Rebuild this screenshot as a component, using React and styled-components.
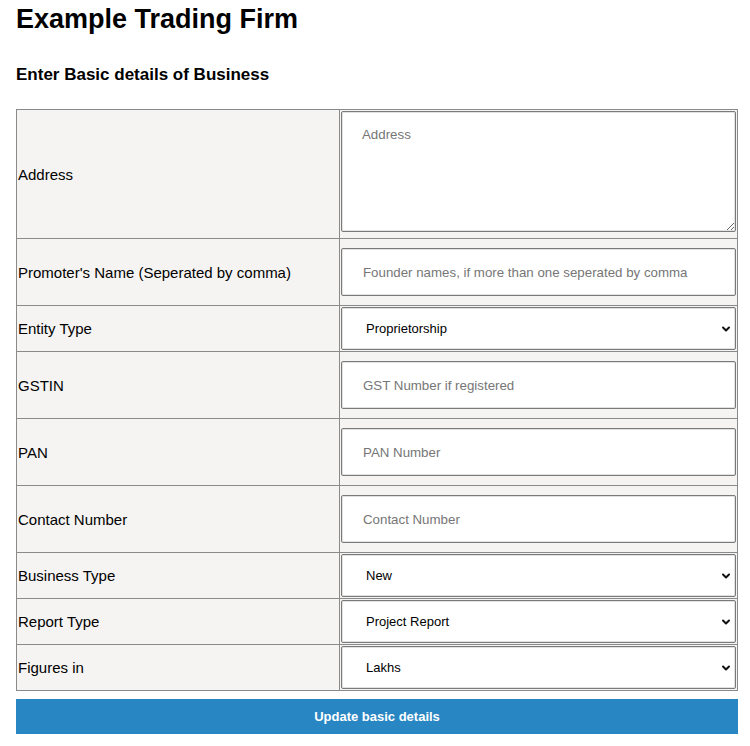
import styled, { createGlobalStyle } from "styled-components";
import { ChevronDown } from "lucide-react";

const GlobalStyle = createGlobalStyle`
  body {
    margin: 0;
    background: #fff;
    font-family: "Liberation Sans", Arial, sans-serif;
    color: #000;
  }
`;

const Page = styled.div`
  padding: 0 12px 0 16px;
  width: 722px;
`;

const Title = styled.h1`
  font-size: 27px;
  font-weight: 700;
  margin: 4px 0 0;
`;

const SubTitle = styled.h3`
  font-size: 17px;
  font-weight: 700;
  margin: 30px 0 24px;
`;

const Table = styled.table`
  width: 722px;
  border-collapse: collapse;
  table-layout: fixed;
`;

const Label = styled.td`
  width: 320px;
  border: 1px solid #8a8a8a;
  background: #f5f4f2;
  padding: 0 1px;
  font-size: 15px;
  vertical-align: middle;
`;

const Field = styled.td`
  border: 1px solid #8a8a8a;
  background: #f5f4f2;
  padding: 1px;
`;

const boxBorder = `
  border: 1px solid #7a7a7a;
  box-shadow: inset 0 0 0 1px #e2e2e2;
  border-radius: 2px;
`;

const TextArea = styled.textarea`
  display: block;
  box-sizing: border-box;
  width: 100%;
  height: 121px;
  margin: 0 0 5px;
  padding: 15px 20px;
  ${boxBorder}
  background: #fff;
  font: 13.3px "Liberation Sans", Arial, sans-serif;
  resize: vertical;
  &::placeholder { color: #767676; }
`;

const Input = styled.input`
  display: block;
  box-sizing: border-box;
  width: 100%;
  height: 48px;
  margin: 8px 0;
  padding: 0 21px;
  ${boxBorder}
  background: #fff;
  font: 13.3px "Liberation Sans", Arial, sans-serif;
  &::placeholder { color: #767676; }
`;

const SelectWrap = styled.div`
  position: relative;
`;

const Select = styled.select`
  display: block;
  box-sizing: border-box;
  width: 100%;
  height: 43px;
  padding: 0 24px;
  appearance: none;
  ${boxBorder}
  background: #fff;
  color: #000;
  font: 13px "Liberation Sans", Arial, sans-serif;
`;

const Arrow = styled.span`
  position: absolute;
  right: 4px;
  top: 50%;
  transform: translateY(-50%);
  display: flex;
  pointer-events: none;
  color: #111;
`;

const Button = styled.button`
  position: relative;
  display: block;
  width: 722px;
  height: 35px;
  margin-top: 8px;
  border: none;
  background: #2886c3;
  color: #fff;
  font: 700 13px "Liberation Sans", Arial, sans-serif;
  cursor: pointer;
  &::after {
    content: "";
    position: absolute;
    left: 110px;
    right: 110px;
    top: 100%;
    height: 14px;
    background: radial-gradient(ellipse at top, rgba(0,0,0,0.07), rgba(0,0,0,0) 70%);
  }
`;

const Dropdown = ({ options }) => (
  <SelectWrap>
    <Select defaultValue={options[0]}>
      {options.map((o) => (
        <option key={o}>{o}</option>
      ))}
    </Select>
    <Arrow>
      <ChevronDown size={12} strokeWidth={4} />
    </Arrow>
  </SelectWrap>
);

const rows = [
  { label: "Promoter's Name (Seperated by comma)", placeholder: "Founder names, if more than one seperated by comma" },
  { label: "Entity Type", options: ["Proprietorship", "Partnership", "Private Limited"] },
  { label: "GSTIN", placeholder: "GST Number if registered" },
  { label: "PAN", placeholder: "PAN Number" },
  { label: "Contact Number", placeholder: "Contact Number" },
  { label: "Business Type", options: ["New", "Existing"] },
  { label: "Report Type", options: ["Project Report", "CMA Report"] },
  { label: "Figures in", options: ["Lakhs", "Crores"] },
];

export default function App() {
  return (
    <Page>
      <GlobalStyle />
      <Title>Example Trading Firm</Title>
      <SubTitle>Enter Basic details of Business</SubTitle>
      <Table>
        <tbody>
          <tr>
            <Label>Address</Label>
            <Field>
              <TextArea placeholder="Address" />
            </Field>
          </tr>
          {rows.map((r) => (
            <tr key={r.label}>
              <Label>{r.label}</Label>
              <Field>
                {r.options ? <Dropdown options={r.options} /> : <Input placeholder={r.placeholder} />}
              </Field>
            </tr>
          ))}
        </tbody>
      </Table>
      <Button>Update basic details</Button>
    </Page>
  );
}
